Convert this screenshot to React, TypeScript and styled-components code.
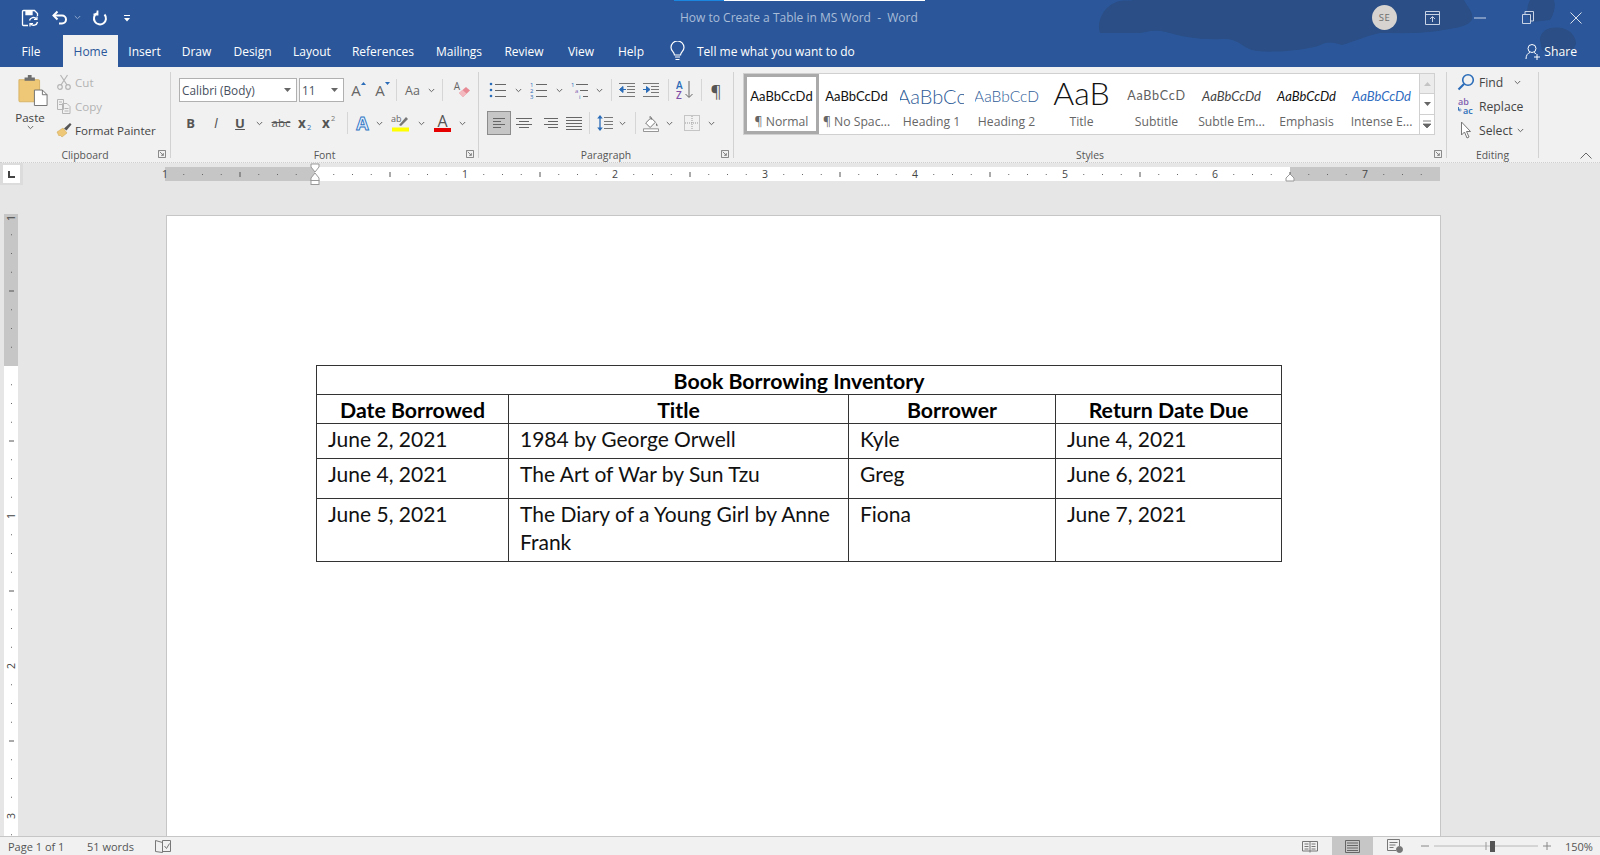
import React from "react";
import styled, { createGlobalStyle } from "styled-components";

const Global = createGlobalStyle`
  html, body { margin: 0; padding: 0; background: #e6e6e6; }
  * { box-sizing: border-box; }
`;
const ui = `"Open Sans", "Noto Sans", "Liberation Sans", sans-serif`;

const Shell = styled.div`
  width: 1600px; height: 855px; display: flex; flex-direction: column; overflow: hidden;
  font-family: ${ui}; color: #444; position: relative;
`;
/* ---------- title bar ---------- */
const TitleBar = styled.header`
  height: 67px; background: #2b579a; position: relative; flex: none; color: #fff;
`;
const Art = styled.svg`
  position: absolute; left: 1090px; top: 0; width: 510px; height: 67px;
`;
const LoadBar = styled.div`
  position: absolute; left: 674px; top: 0; width: 251px; height: 1px;
  background: linear-gradient(90deg, #1a86e0 0 50px, #fff 50px);
`;
const TopRow = styled.div`
  height: 35px; display: flex; align-items: center; position: relative;
`;
const Qat = styled.div`
  width: 680px; display: flex; align-items: center; padding-left: 21px;
`;
const DocTitle = styled.div`
  width: 340px; font-size: 12px; color: #a9bcd8; white-space: pre;
`;
const WinControls = styled.div`
  margin-left: 352px; display: flex; align-items: center;
`;
const Avatar = styled.div`
  width: 25px; height: 25px; border-radius: 50%; background: #d6d3d0; color: #6d6d6d; margin-right: 11px;
  font-size: 9.5px; display: flex; align-items: center; justify-content: center; letter-spacing: .5px;
`;
const TabRow = styled.nav`
  height: 32px; display: flex; align-items: stretch; position: relative;
`;
const Tab = styled.div<{ $active?: boolean; $w: number }>`
  width: ${p => p.$w}px; display: flex; align-items: center; justify-content: center;
  font-size: 12px; white-space: nowrap;
  color: ${p => (p.$active ? "#2b579a" : "#fff")};
  background: ${p => (p.$active ? "#f1f1f1" : "transparent")};
  margin-left: ${p => (p.$active ? 1 : 0)}px;
`;
const TellMe = styled.div`
  display: flex; align-items: center; gap: 12px; font-size: 12px; color: #fff; margin-left: 15px;
`;
const Share = styled.div`
  margin-left: auto; margin-right: 23px; display: flex; align-items: center; gap: 3px; font-size: 12.2px;
  color: #fff;
`;
/* ---------- ribbon ---------- */
const Ribbon = styled.section`
  height: 96px; flex: none; background: #f1f1f1; display: flex; padding-top: 5px;
  border-bottom: 1px dotted #cfcfcf; position: relative;
`;
const Group = styled.div<{ $w: number }>`
  width: ${p => p.$w}px; height: 86px; border-right: 1px solid #d2d2d2; position: relative;
  display: flex; flex-direction: column; flex: none;
`;
const GroupBody = styled.div<{ $pl?: number }>`
  flex: 1; padding-left: ${p => p.$pl ?? 0}px; min-height: 0;
`;
const GroupLabel = styled.div`
  height: 15px; line-height: 15px; text-align: center; font-size: 10.4px; color: #555; margin-bottom: -5px;
`;
const Launcher = styled.svg`
  position: absolute; right: 4px; bottom: 0; width: 8px; height: 8px;
`;
const ClipLayout = styled.div`
  display: flex; height: 100%;
`;
const PasteCol = styled.div`
  width: 56px; display: flex; flex-direction: column; align-items: center; padding-top: 2px; padding-left: 4px;
  font-size: 11.6px; color: #444;
  svg.paste { margin-left: 5px; }
`;
const PasteLabel = styled.div`
  margin-top: 4px; line-height: 14px;
`;
const ClipList = styled.div`
  display: flex; flex-direction: column; margin-top: -2px;
`;
const ClipItem = styled.div<{ $dim?: boolean }>`
  height: 24px; display: flex; align-items: center; font-size: 11.6px; white-space: nowrap;
  color: ${p => (p.$dim ? "#b3b3b3" : "#444")};
  svg { width: 16px; height: 16px; margin-right: 3px; flex: none; }
`;
const Rows = styled.div`
  display: flex; flex-direction: column; gap: 9px; padding-top: 6px;
`;
const ToolRow = styled.div<{ $pl?: number }>`
  display: flex; align-items: center; height: 24px; padding-left: ${p => p.$pl ?? 0}px;
`;
const Slot = styled.div<{ $w: number }>`
  width: ${p => p.$w}px; height: 24px; flex: none; display: flex; align-items: center; justify-content: center;
  color: #5a5a5a;
`;
const ActiveSlot = styled(Slot)`
  background: #c6c6c6; border: 1px solid #8c8c8c;
`;
const Divider = styled.div`
  width: 1px; height: 22px; background: #d6d6d6;
`;
const Combo = styled.div<{ $w: number }>`
  width: ${p => p.$w}px; height: 24px; background: #fff; border: 1px solid #b0b0b0; flex: none;
  display: flex; align-items: center; justify-content: space-between; padding: 0 5px 0 2px;
  font-size: 11.8px; color: #48505e; margin-right: 2px; white-space: nowrap;
`;
const AaText = styled.span`
  font-size: 12.5px; color: #666;
`;
const FmtGlyph = styled.span<{ $weight?: number; $italic?: boolean; $under?: boolean; $strike?: boolean; $size?: number }>`
  font-size: ${p => p.$size ?? 13}px; color: #555; line-height: 1;
  font-weight: ${p => p.$weight ?? 400};
  font-style: ${p => (p.$italic ? "italic" : "normal")};
  text-decoration: ${p => (p.$under ? "underline" : p.$strike ? "line-through" : "none")};
`;
const Gallery = styled.div`
  width: 692px; height: 62px; margin-top: 1px; background: #fff; border: 1px solid #d0d0d0; display: flex;
`;
const StyleItem = styled.div<{ $selected?: boolean }>`
  width: 75px; flex: none; overflow: hidden; display: flex; flex-direction: column; align-items: center;
  ${p => (p.$selected ? "border: 3px solid #aaaaaa;" : "padding: 3px 0;")}
`;
const Sample = styled.div<{ $size: number; $color: string; $italic?: boolean; $light?: boolean; $lift?: number; $ls?: number }>`
  height: 36px; line-height: ${p => 36 - (p.$lift ?? 0)}px; white-space: nowrap; font-size: ${p => p.$size}px; color: ${p => p.$color};
  font-style: ${p => (p.$italic ? "italic" : "normal")};
  font-weight: ${p => (p.$light ? 300 : 400)};
  font-family: "Lato", sans-serif;
  letter-spacing: ${p => p.$ls ?? 0}px;
  margin-top: 1px;
  width: 64px; display: flex; justify-content: center; overflow: hidden;
`;
const SampleLabel = styled.div`
  font-size: 12.2px; color: #666; line-height: 16px; white-space: nowrap; margin-top: 0;
`;
const Scroller = styled.div`
  margin-left: auto; width: 15px; display: flex; flex-direction: column; border-left: 1px solid #d0d0d0;
`;
const ScrollCell = styled.div<{ $dim?: boolean }>`
  flex: 1; display: flex; align-items: center; justify-content: center;
  background: ${p => (p.$dim ? "#ececec" : "#fff")};
  & + & { border-top: 1px solid #d0d0d0; }
`;
const EditList = styled.div`
  margin-top: -2px;
`;
const EditItem = styled.div`
  height: 24px; display: flex; align-items: center; font-size: 12.2px; color: #444; padding-left: 10px; gap: 4px;
  svg.ico { width: 18px; height: 18px; flex: none; }
`;
const Collapse = styled.div`
  margin-left: 41px; align-self: flex-end; margin-bottom: -2px;
`;
/* ---------- ruler ---------- */
const RulerRow = styled.div`
  height: 22px; flex: none; background: #e6e6e6; display: flex;
`;
const Corner = styled.div`
  width: 23px; height: 22px; background: #dcdcdc; padding: 2px 3px; flex: none;
`;
const CornerInner = styled.div`
  width: 17px; height: 18px; background: #fff; display: flex; align-items: center; justify-content: center;
`;
const HRuler = styled.svg`
  margin-left: 142px; width: 1275px; height: 22px; display: block; flex: none; overflow: visible;
`;
/* ---------- document ---------- */
const Workspace = styled.main`
  flex: 1; min-height: 0; background: #e6e6e6; display: flex; overflow: hidden;
`;
const VRuler = styled.svg`
  margin: 29px 0 0 4px; width: 14px; height: 622px; display: block; flex: none;
`;
const Page = styled.div`
  width: 1275px; margin: 30px 0 0 148px; background: #fff; border: 1px solid #c6c6c6; border-bottom: 0;
  padding: 149px 0 0 149px; flex: none;
`;
const DocTable = styled.table`
  width: 965px; table-layout: fixed; border-collapse: collapse;
  font-family: "Lato", "Carlito", sans-serif; color: #111;
`;
const Tr = styled.tr<{ $h: number }>` height: ${p => p.$h}px; `;
const Cell = styled.td`
  border: 1px solid #333; font-size: 21px; line-height: 27.5px; vertical-align: top; padding: 1px 4px 0 11px;
`;
const Head = styled.th`
  border: 1px solid #333; font-size: 21.3px; font-weight: 700; line-height: 26px; padding: 1px 0 0; text-align: center; color: #000;
`;
/* ---------- status ---------- */
const Status = styled.footer`
  height: 19px; flex: none; background: #f1f1f1; border-top: 1px solid #c6c6c6; display: flex; align-items: center;
  font-size: 11px; color: #555; padding-left: 8px; position: relative;
`;
const StatusText = styled.span<{ $w: number }>`
  width: ${p => p.$w}px; white-space: nowrap;
`;
const ViewBtn = styled.div<{ $w: number; $active?: boolean }>`
  width: ${p => p.$w}px; height: 18px; display: flex; align-items: center; justify-content: center; flex: none;
  background: ${p => (p.$active ? "#c6c6c6" : "transparent")};
`;
const Spring = styled.div`
  flex: 1;
`;
const Zoom = styled.div`
  display: flex; align-items: center; margin-left: 5px; gap: 14px;
`;

/* ---------- icons ---------- */
const glyphFont = "Open Sans, sans-serif";
const Ch = ({ c = "#666" }: { c?: string }) => (
  <svg width="7" height="5" viewBox="0 0 7 5"><path d="M.8 1l2.700 2.700L6.200 1" fill="none" stroke={c} /></svg>
);
const Tri = () => <svg width="7" height="4" viewBox="0 0 7 4"><path d="M0 0h7L3.500 4z" fill="#666" /></svg>;
const LaunchIcon = () => (
  <Launcher viewBox="0 0 9 9"><path d="M.5 8.500v-8h8v8z M2 2l4 4M6 3.500V6H3.500" fill="none" stroke="#777" strokeWidth="1" /></Launcher>
);
const Lines = ({ rows, stroke = "#666" }: { rows: [number, number, number][]; stroke?: string }) => (
  <svg width="18" height="18" viewBox="0 0 18 18">
    {rows.map(([y, a, b], i) => <path key={i} d={`M${a} ${y}.5H${b}`} stroke={stroke} />)}
  </svg>
);
const Save = () => (
  <svg width="18" height="18" viewBox="0 0 18 18" fill="none" stroke="#fff" strokeWidth="1.300">
    <path d="M7 16.500H2.500a1 1 0 0 1-1-1v-13a1 1 0 0 1 1-1h11l3 3V7" />
    <path d="M5 1.500v4h6v-4" fill="#fff" />
    <path d="M8.500 11.500a4 4 0 0 1 7-1.500M16.500 13a4 4 0 0 1-7 1.800" strokeWidth="1.400" />
    <path d="M16 7.500V10.500H13M9 17.500V14.500H12" strokeWidth="1.200" />
  </svg>
);
const Undo = () => (
  <svg width="16" height="16" viewBox="0 0 16 16" fill="none" stroke="#fff" strokeWidth="2">
    <path d="M1.500 5.500h8.500a4 4 0 0 1 0 8H7" /><path d="M5.500 1.500l-4 4 4 4" />
  </svg>
);
const Redo = () => (
  <svg width="16" height="16" viewBox="0 0 16 16" fill="none" stroke="#fff" strokeWidth="2">
    <path d="M5 3.200A6 6 0 1 0 12.500 4.500" /><path d="M5.500 .5v4h-4" strokeWidth="1.800" />
  </svg>
);
const Customize = () => (
  <svg width="8" height="8" viewBox="0 0 8 8" fill="#fff"><path d="M1 1h6v1H1z M1 4h6L4 7.500z" /></svg>
);
const PasteIcon = () => (
  <svg className="paste" width="30" height="33" viewBox="0 0 32 34">
    <path d="M1 5.500h21a1 1 0 0 1 1 1V29H2a1 1 0 0 1-1-1z" fill="#eec877" stroke="#d8b263" />
    <path d="M7 5V3h3.500V.5h4V3H18v3.500H7z" fill="#6e6e6e" />
    <path d="M17.500 16.500h8.500l5 5V33h-13.500z" fill="#fff" stroke="#6e6e6e" />
    <path d="M26 16.500v5h5" fill="none" stroke="#6e6e6e" />
  </svg>
);
const Cut = () => (
  <svg viewBox="0 0 16 16" fill="none" stroke="#b5b5b5" strokeWidth="1.200">
    <circle cx="4" cy="13" r="2.300" /><circle cx="12" cy="13" r="2.300" /><path d="M5 11L11.500 1M11 11L4.500 1" />
  </svg>
);
const Copy = () => (
  <svg viewBox="0 0 16 16" fill="none" stroke="#b5b5b5">
    <path d="M1.500 1.500h6v10h-6zM6.500 5.500h4.500l3 3v7h-7.500zM3 4h3M3 6.500h3M8.500 10.500h4M8.500 13h4" />
  </svg>
);
const Painter = () => (
  <svg viewBox="0 0 16 16">
    <path d="M1 10l6-4 4 5-5 4-2-2-1 1z" fill="#eec877" stroke="#caa24f" strokeWidth=".5" />
    <path d="M8 6.500L14 1l1.500 1.500-5 6z" fill="#555" />
  </svg>
);
const GrowA = ({ up }: { up: boolean }) => (
  <svg width="18" height="18" viewBox="0 0 18 18">
    <text x="7" y="15" fontSize="15" textAnchor="middle" fill="#666" fontFamily={glyphFont}>A</text>
    <path d={up ? "M12 4l2.500-3L17 4z" : "M12 1h5l-2.500 3z"} fill="#2b6cb8" />
  </svg>
);
const ClearFmt = () => (
  <svg width="20" height="20" viewBox="0 0 20 20">
    <text x="5" y="9.500" fontSize="10" textAnchor="middle" fill="#666" fontFamily={glyphFont}>A</text>
    <path d="M7 13l7-6 4 3.500-7 6.500z" fill="#e88a94" />
    <path d="M7 13l3.500-3 4 3.500-3.500 3.500z" fill="#f3b9bf" />
  </svg>
);
const SubSup = ({ sup }: { sup?: boolean }) => (
  <svg width="17" height="16" viewBox="0 0 17 16">
    <text x="0" y="12.500" fontSize="13.500" fontWeight="700" fill="#555" fontFamily={glyphFont}>x</text>
    <text x="9" y={sup ? 6 : 15} fontSize="7.500" fill={sup ? "#777" : "#2b6cb8"} fontFamily={glyphFont}>2</text>
  </svg>
);
const TextFx = () => (
  <svg width="17" height="18" viewBox="0 0 17 18">
    <text x="8.500" y="16" fontSize="18" fontWeight="700" textAnchor="middle" fill="#e3eefa" stroke="#2e75c4" strokeWidth=".9" fontFamily={glyphFont}>A</text>
  </svg>
);
const Highlight = () => (
  <svg width="19" height="20" viewBox="0 0 19 20">
    <text x="0" y="9" fontSize="9" fill="#666" fontFamily={glyphFont}>ab</text>
    <path d="M8 12l7-8 2 2-7 7z" fill="#777" />
    <rect x="1" y="14.500" width="17" height="4" fill="#ffff00" />
  </svg>
);
const FontColor = () => (
  <svg width="17" height="19" viewBox="0 0 17 19">
    <text x="8.500" y="13" fontSize="16" textAnchor="middle" fill="#555" fontFamily={glyphFont}>A</text>
    <rect y="14" width="17" height="4" fill="#e60000" />
  </svg>
);
const Bullets = () => (
  <svg width="18" height="18" viewBox="0 0 18 18">
    <circle cx="2" cy="3" r="1.300" fill="#2b6cb8" /><circle cx="2" cy="9" r="1.300" fill="#2b6cb8" /><circle cx="2" cy="15" r="1.300" fill="#2b6cb8" />
    <path d="M6 3.500h11M6 9.500h11M6 15.500h11" stroke="#666" />
  </svg>
);
const Numbering = () => (
  <svg width="18" height="18" viewBox="0 0 18 18">
    <g fontSize="6" fill="#2b6cb8" fontFamily={glyphFont}>
      <text x="0" y="5.500">1</text><text x="0" y="11.500">2</text><text x="0" y="17.500">3</text>
    </g>
    <path d="M6 3.500h11M6 9.500h11M6 15.500h11" stroke="#666" />
  </svg>
);
const Multi = () => (
  <svg width="18" height="18" viewBox="0 0 18 18">
    <text x="0" y="5.500" fontSize="6" fill="#2b6cb8" fontFamily={glyphFont}>1</text>
    <text x="4" y="11.500" fontSize="6" fill="#7f5fb0" fontFamily={glyphFont}>a</text>
    <text x="8" y="17.500" fontSize="6" fill="#2b6cb8" fontFamily={glyphFont}>i</text>
    <path d="M5 3.500h12M9 9.500h8M12 15.500h5" stroke="#666" />
  </svg>
);
const Indent = ({ inc }: { inc?: boolean }) => (
  <svg width="16" height="16" viewBox="0 0 16 16">
    <path d="M0 1.500h16M8 4.500h8M8 7.500h8M8 10.500h8M0 14.500h16" stroke="#777" />
    <path d={inc ? "M0 7.500h5M3.500 4.500l3.500 3-3.500 3z" : "M7 7.500H2M4 4.500L.5 7.500l3.500 3z"} stroke="#2b6cb8" fill="#2b6cb8" />
  </svg>
);
const Sort = () => (
  <svg width="18" height="20" viewBox="0 0 18 20">
    <text x="0" y="9" fontSize="10" fontWeight="600" fill="#2b6cb8" fontFamily={glyphFont}>A</text>
    <text x="0" y="18.500" fontSize="10" fontWeight="600" fill="#7f4fa8" fontFamily={glyphFont}>Z</text>
    <path d="M13 1v16M9.500 14l3.500 3.500 3.500-3.500" fill="none" stroke="#666" />
  </svg>
);
const LineSpace = () => (
  <svg width="16" height="18" viewBox="0 0 16 18">
    <path d="M3 2v14" stroke="#2b6cb8" strokeWidth="1.300" />
    <path d="M.2 4.500L3 1l2.800 3.500zM.2 13.500L3 17l2.800-3.500z" fill="#2b6cb8" />
    <path d="M7 3.500h9M7 7.500h9M7 10.500h9M7 14.500h9" stroke="#777" />
  </svg>
);
const Shading = () => (
  <svg width="18" height="19" viewBox="0 0 18 19">
    <path d="M3 9l6-6 5 5-6 6z" fill="#fff" stroke="#666" />
    <path d="M7 2.500c2-2 3 1 2 3" fill="none" stroke="#666" />
    <path d="M15 9c1 1.500 2 2.500 1 3.500-1.500 0-1.500-2-1-3.500z" fill="#666" />
    <path d="M.5 15.500h17v3H.5z" fill="#fff" stroke="#888" />
  </svg>
);
const Borders = () => (
  <svg width="16" height="16" viewBox="0 0 16 16" fill="none" stroke="#999" strokeDasharray="1 1">
    <path d="M.5 .5h15v15H.5zM8 1v14M1 8h14" />
  </svg>
);
const Find = () => (
  <svg className="ico" viewBox="0 0 18 18" fill="none" stroke="#2b6cb8" strokeWidth="1.600">
    <circle cx="11" cy="7" r="5.300" /><path d="M7 11L1.500 16.500" strokeWidth="2.200" />
  </svg>
);
const Replace = () => (
  <svg className="ico" viewBox="0 0 18 18" fill="none">
    <text x="1" y="7.500" fontSize="9" fontWeight="600" fill="#7f5fb0" fontFamily={glyphFont}>ab</text>
    <text x="6" y="17" fontSize="9" fontWeight="600" fill="#2b6cb8" fontFamily={glyphFont}>ac</text>
    <path d="M1.500 10v3h3M3 11.500l-1.500 1.500L3 14.500" stroke="#2b6cb8" strokeWidth=".9" />
  </svg>
);
const Cursor = () => (
  <svg className="ico" viewBox="0 0 18 18" fill="#fff" stroke="#777"><path d="M4.500 1v13l3-3 2.500 6 2-1-2.500-5.500h4z" /></svg>
);
const Bulb = () => (
  <svg width="15" height="20" viewBox="0 0 15 20" fill="none" stroke="#fff" strokeWidth="1.200">
    <path d="M4.500 14c0-3-3.500-4-3.500-7.500a6.500 6.500 0 0 1 13 0C14 10 10.500 11 10.500 14zM5 16h5M5.500 18.500h4" />
  </svg>
);

/* horizontal ruler, origin x = 165 on the page */
const rulerNums = [[0, "1"], [300, "1"], [450, "2"], [600, "3"], [750, "4"], [900, "5"], [1050, "6"], [1200, "7"]] as [number, string][];
const HorizontalRuler = () => {
  const marks: React.ReactNode[] = [];
  for (let i = 1; i < 68; i++) {
    const x = i * 18.75;
    if (i % 8 === 0) continue;
    marks.push(
      i % 4 === 0
        ? <path key={i} d={`M${x} 9v5`} stroke="#555" />
        : <rect key={i} x={x - .5} y={11} width="1" height="1" fill="#666" />
    );
  }
  return (
    <HRuler viewBox="0 0 1275 22">
      <rect y="4" width="1275" height="14" fill="#fff" />
      <rect y="4" width="150" height="14" fill="#c6c6c6" />
      <rect x="1125" y="4" width="150" height="14" fill="#c6c6c6" />
      {marks}
      {rulerNums.map(([x, t], i) => (
        <text key={i} x={x} y="15" fontSize="10.500" textAnchor="middle" fill="#444" fontFamily="Open Sans">{t}</text>
      ))}
      <path d="M146 1h8v3l-4 5-4-5z" fill="#fff" stroke="#999" />
      <path d="M146 18v-3l4-5 4 5v3z" fill="#fff" stroke="#999" />
      <rect x="146" y="17.500" width="8" height="4" fill="#fff" stroke="#999" />
      <path d="M1121 18v-3l4-4 4 4v3z" fill="#fff" stroke="#999" />
    </HRuler>
  );
};
const VerticalRuler = () => {
  const marks: React.ReactNode[] = [];
  for (let i = 0; i < 34; i++) {
    const y = 2 + i * 18.75;
    if (i % 8 === 0) continue;
    marks.push(
      i % 4 === 0
        ? <path key={i} d={`M5 ${y}h5`} stroke="#555" />
        : <rect key={i} x="7" y={y - .5} width="1" height="1" fill="#666" />
    );
  }
  return (
    <VRuler viewBox="0 0 14 622">
      <rect width="14" height="622" fill="#fff" />
      <rect width="14" height="152" fill="#c6c6c6" />
      {marks}
      {([[4, "1"], [302, "1"], [452, "2"], [602, "3"]] as [number, string][]).map(([y, t], i) => (
        <text key={i} transform={`translate(11 ${y}) rotate(-90)`} fontSize="10.500" textAnchor="middle" fill="#444" fontFamily="Open Sans">{t}</text>
      ))}
    </VRuler>
  );
};

const styleItems = [
  { t: "AaBbCcDd", s: 13, c: "#111", l: "¶ Normal", sel: true },
  { t: "AaBbCcDd", s: 13, c: "#111", l: "¶ No Spac..." },
  { t: "AaBbCc", s: 20, c: "#2f5c97", l: "Heading 1", light: true },
  { t: "AaBbCcD", s: 15.5, c: "#2f5c97", l: "Heading 2", light: true },
  { t: "AaB", s: 32, c: "#111", l: "Title", light: true, lift: 6 },
  { t: "AaBbCcD", s: 12.6, c: "#5f5f5f", l: "Subtitle", ls: .7 },
  { t: "AaBbCcDd", s: 13, c: "#444", l: "Subtle Em...", i: true },
  { t: "AaBbCcDd", s: 13, c: "#111", l: "Emphasis", i: true },
  { t: "AaBbCcDd", s: 13, c: "#2f6cc0", l: "Intense E...", i: true },
];

const App = () => (
  <Shell>
    <Global />
    <TitleBar>
      <Art viewBox="0 0 510 67">
        <path d="M10 33C6 22 14 4 30 1c6-1 10 0 14-1h330c4 8 10 12 8 20-6 8-20 8-34 11-20 3-40 2-58 2-14 3-24 8-38 12-10-3-14-4-24 1-12 4-50 8-66 4-10-3-14-12-30-11-20 1-40-2-56-7-12-3-20 0-26 1z" fill="#2a4e85" />
        <path d="M440 0h24c2 6 0 14-4 20l-18 2c-6-6-6-14-2-22z" fill="#2a4e85" />
        <path d="M450 40c0-10 10-14 22-12 8 2 14 8 14 16l-4 8c-10 4-24 2-30-2z" fill="#2a4e85" />
      </Art>
      <LoadBar />
      <TopRow>
        <Qat>
          <Save />
          <Slot $w={13} />
          <Undo />
          <Slot $w={18}><Ch c="#8fa8cc" /></Slot>
          <Slot $w={6} />
          <Redo />
          <Slot $w={38}><Customize /></Slot>
        </Qat>
        <DocTitle>How to Create a Table in MS Word  -  Word</DocTitle>
        <WinControls>
          <Avatar>SE</Avatar>
          <Slot $w={48}>
            <svg width="15" height="14" viewBox="0 0 15 14" fill="none" stroke="#c8d4e6"><path d="M.5 .5h14v13H.5zM.5 3.500h14M7.500 11V6M5 8l2.500-2.500L10 8" /></svg>
          </Slot>
          <Slot $w={48}><svg width="12" height="2" viewBox="0 0 12 2"><path d="M0 1h12" stroke="#c8d4e6" /></svg></Slot>
          <Slot $w={48}><svg width="12" height="13" viewBox="0 0 12 13" fill="none" stroke="#c8d4e6"><path d="M.5 3.500h8v9h-8zM3 3V.5h8.500V10H9" /></svg></Slot>
          <Slot $w={48}><svg width="12" height="12" viewBox="0 0 12 12" stroke="#d8e0ec"><path d="M.5 .5l11 11M11.500 .5l-11 11" /></svg></Slot>
        </WinControls>
      </TopRow>
      <TabRow>
        <Tab $w={62}>File</Tab>
        <Tab $w={55} $active>Home</Tab>
        <Tab $w={53}>Insert</Tab>
        <Tab $w={51}>Draw</Tab>
        <Tab $w={61}>Design</Tab>
        <Tab $w={58}>Layout</Tab>
        <Tab $w={84}>References</Tab>
        <Tab $w={68}>Mailings</Tab>
        <Tab $w={62}>Review</Tab>
        <Tab $w={52}>View</Tab>
        <Tab $w={48}>Help</Tab>
        <TellMe><Bulb />Tell me what you want to do</TellMe>
        <Share>
          <svg width="16" height="17" viewBox="0 0 16 17" fill="none" stroke="#fff"><circle cx="7" cy="5.500" r="4" /><path d="M1 16c0-4 2-6 4-6.500M9 9.500c1 .3 1.500 .7 2 1.500M12 11v6M9 14h6" /></svg>
          Share
        </Share>
      </TabRow>
    </TitleBar>

    <Ribbon>
      <Group $w={171}>
        <GroupBody>
          <ClipLayout>
            <PasteCol>
              <PasteIcon />
              <PasteLabel>Paste</PasteLabel>
              <Ch />
            </PasteCol>
            <ClipList>
              <ClipItem $dim><Cut />Cut</ClipItem>
              <ClipItem $dim><Copy />Copy</ClipItem>
              <ClipItem><Painter />Format Painter</ClipItem>
            </ClipList>
          </ClipLayout>
        </GroupBody>
        <GroupLabel>Clipboard</GroupLabel>
        <LaunchIcon />
      </Group>

      <Group $w={308}>
        <GroupBody>
          <Rows>
            <ToolRow $pl={8}>
              <Combo $w={118}>Calibri (Body)<Tri /></Combo>
              <Combo $w={45}>11<Tri /></Combo>
              <Slot $w={24}><GrowA up /></Slot>
              <Slot $w={24}><GrowA up={false} /></Slot>
              <Slot $w={5}><Divider /></Slot>
              <Slot $w={27}><AaText>Aa</AaText></Slot>
              <Slot $w={10}><Ch /></Slot>
              <Slot $w={12}><Divider /></Slot>
              <Slot $w={28}><ClearFmt /></Slot>
            </ToolRow>
            <ToolRow $pl={7}>
              <Slot $w={25}><FmtGlyph $weight={700}>B</FmtGlyph></Slot>
              <Slot $w={26}><FmtGlyph $italic $size={14}>I</FmtGlyph></Slot>
              <Slot $w={22}><FmtGlyph $weight={700} $under>U</FmtGlyph></Slot>
              <Slot $w={17}><Ch /></Slot>
              <Slot $w={26}><FmtGlyph $strike $size={11.5}>abc</FmtGlyph></Slot>
              <Slot $w={24}><SubSup /></Slot>
              <Slot $w={24}><SubSup sup /></Slot>
              <Slot $w={10}><Divider /></Slot>
              <Slot $w={20}><TextFx /></Slot>
              <Slot $w={14}><Ch /></Slot>
              <Slot $w={28}><Highlight /></Slot>
              <Slot $w={15}><Ch /></Slot>
              <Slot $w={27}><FontColor /></Slot>
              <Slot $w={13}><Ch /></Slot>
            </ToolRow>
          </Rows>
        </GroupBody>
        <GroupLabel>Font</GroupLabel>
        <LaunchIcon />
      </Group>

      <Group $w={255}>
        <GroupBody>
          <Rows>
            <ToolRow $pl={5}>
              <Slot $w={28}><Bullets /></Slot>
              <Slot $w={12}><Ch /></Slot>
              <Slot $w={29}><Numbering /></Slot>
              <Slot $w={12}><Ch /></Slot>
              <Slot $w={30}><Multi /></Slot>
              <Slot $w={9}><Ch /></Slot>
              <Slot $w={14}><Divider /></Slot>
              <Slot $w={17}><Indent /></Slot>
              <Slot $w={32}><Indent inc /></Slot>
              <Slot $w={2}><Divider /></Slot>
              <Slot $w={31}><Sort /></Slot>
              <Slot $w={2}><Divider /></Slot>
              <Slot $w={28}><FmtGlyph $size={17}>¶</FmtGlyph></Slot>
            </ToolRow>
            <ToolRow $pl={8}>
              <ActiveSlot $w={24}><Lines rows={[[4, 3, 15], [7, 3, 11], [10, 3, 15], [13, 3, 11]]} /></ActiveSlot>
              <Slot $w={26}><Lines rows={[[4, 1, 17], [7, 4, 14], [10, 1, 17], [13, 4, 14]]} /></Slot>
              <Slot $w={25}><Lines rows={[[4, 3, 17], [7, 7, 17], [10, 3, 17], [13, 7, 17]]} /></Slot>
              <Slot $w={24}><Lines rows={[[3, 1, 17], [6, 1, 17], [9, 1, 17], [12, 1, 17], [15, 1, 17]]} /></Slot>
              <Slot $w={6}><Divider /></Slot>
              <Slot $w={25}><LineSpace /></Slot>
              <Slot $w={10}><Ch /></Slot>
              <Slot $w={16}><Divider /></Slot>
              <Slot $w={16}><Shading /></Slot>
              <Slot $w={21}><Ch /></Slot>
              <Slot $w={23}><Borders /></Slot>
              <Slot $w={16}><Ch /></Slot>
            </ToolRow>
          </Rows>
        </GroupBody>
        <GroupLabel>Paragraph</GroupLabel>
        <LaunchIcon />
      </Group>

      <Group $w={713}>
        <GroupBody $pl={9}>
          <Gallery>
            {styleItems.map((it, i) => (
              <StyleItem key={i} $selected={it.sel}>
                <Sample $size={it.s} $color={it.c} $italic={it.i} $light={it.light} $lift={it.lift} $ls={it.ls}>{it.t}</Sample>
                <SampleLabel>{it.l}</SampleLabel>
              </StyleItem>
            ))}
            <Scroller>
              <ScrollCell $dim><svg width="7" height="4" viewBox="0 0 7 4"><path d="M3.500 0L7 4H0z" fill="#c4c4c4" /></svg></ScrollCell>
              <ScrollCell><Tri /></ScrollCell>
              <ScrollCell><svg width="8" height="8" viewBox="0 0 8 8"><path d="M0 1h8M0 4h8L4 8z" stroke="#666" fill="#666" strokeWidth=".8" /></svg></ScrollCell>
            </Scroller>
          </Gallery>
        </GroupBody>
        <GroupLabel>Styles</GroupLabel>
        <LaunchIcon />
      </Group>

      <Group $w={92}>
        <GroupBody>
          <EditList>
            <EditItem><Find />Find <Slot $w={20}><Ch /></Slot></EditItem>
            <EditItem><Replace />Replace</EditItem>
            <EditItem><Cursor />Select <Ch /></EditItem>
          </EditList>
        </GroupBody>
        <GroupLabel>Editing</GroupLabel>
      </Group>
      <Collapse><svg width="12" height="7" viewBox="0 0 12 7"><path d="M.5 6.500L6 1l5.500 5.500" fill="none" stroke="#666" /></svg></Collapse>
    </Ribbon>

    <RulerRow>
      <Corner><CornerInner><svg width="7" height="7" viewBox="0 0 7 7"><path d="M1 0v6h6" fill="none" stroke="#444" strokeWidth="2" /></svg></CornerInner></Corner>
      <HorizontalRuler />
    </RulerRow>

    <Workspace>
      <VerticalRuler />
      <Page>
        <DocTable>
          <colgroup>
            <col style={{ width: 192 }} /><col style={{ width: 340 }} /><col style={{ width: 207 }} /><col style={{ width: 226 }} />
          </colgroup>
          <tbody>
            <Tr $h={29}><Head colSpan={4}>Book Borrowing Inventory</Head></Tr>
            <Tr $h={29}><Head>Date Borrowed</Head><Head>Title</Head><Head>Borrower</Head><Head>Return Date Due</Head></Tr>
            <Tr $h={35}><Cell>June 2, 2021</Cell><Cell>1984 by George Orwell</Cell><Cell>Kyle</Cell><Cell>June 4, 2021</Cell></Tr>
            <Tr $h={40}><Cell>June 4, 2021</Cell><Cell>The Art of War by Sun Tzu</Cell><Cell>Greg</Cell><Cell>June 6, 2021</Cell></Tr>
            <Tr $h={63}><Cell>June 5, 2021</Cell><Cell>The Diary of a Young Girl by Anne Frank</Cell><Cell>Fiona</Cell><Cell>June 7, 2021</Cell></Tr>
          </tbody>
        </DocTable>
      </Page>
    </Workspace>

    <Status>
      <StatusText $w={79}>Page 1 of 1</StatusText>
      <StatusText $w={68}>51 words</StatusText>
      <svg width="16" height="13" viewBox="0 0 16 13" fill="none" stroke="#777"><path d="M7.500 2.500L.5 .5v11l7 1V.5h8v11h-8M9.500 6l2 2.500 3-5" /></svg>
      <Spring />
      <ViewBtn $w={44}><svg width="16" height="13" viewBox="0 0 16 13" fill="none" stroke="#777"><path d="M8 1.500v11M.5 1.500h15v9.500H.5zM2.500 4h4M2.500 6.500h4M2.500 9h4M9.500 4h4M9.500 6.500h4M9.500 9h4" /></svg></ViewBtn>
      <ViewBtn $w={41} $active><svg width="15" height="13" viewBox="0 0 15 13" fill="none" stroke="#666"><path d="M.5 .5h14v12H.5zM2 3h11M2 5.500h11M2 8h11M2 10.500h11" /></svg></ViewBtn>
      <ViewBtn $w={43}><svg width="16" height="14" viewBox="0 0 16 14" fill="none" stroke="#777"><path d="M9 11.500H.5V.5h12V7M2.500 3.500h8M2.500 6h6M2.500 8.500h4" /><circle cx="12.500" cy="10.500" r="3" fill="#777" /></svg></ViewBtn>
      <Zoom>
        <svg width="130" height="16" viewBox="0 0 130 16" fill="none">
          <path d="M0 8h8" stroke="#888" />
          <path d="M13 8h104" stroke="#b8b8b8" />
          <path d="M65 4v8" stroke="#999" />
          <rect x="69" y="3" width="5" height="11" fill="#555" />
          <path d="M122 8h8M126 4v8" stroke="#888" />
        </svg>
        <StatusText $w={35}>150%</StatusText>
      </Zoom>
    </Status>
  </Shell>
);
export default App;
